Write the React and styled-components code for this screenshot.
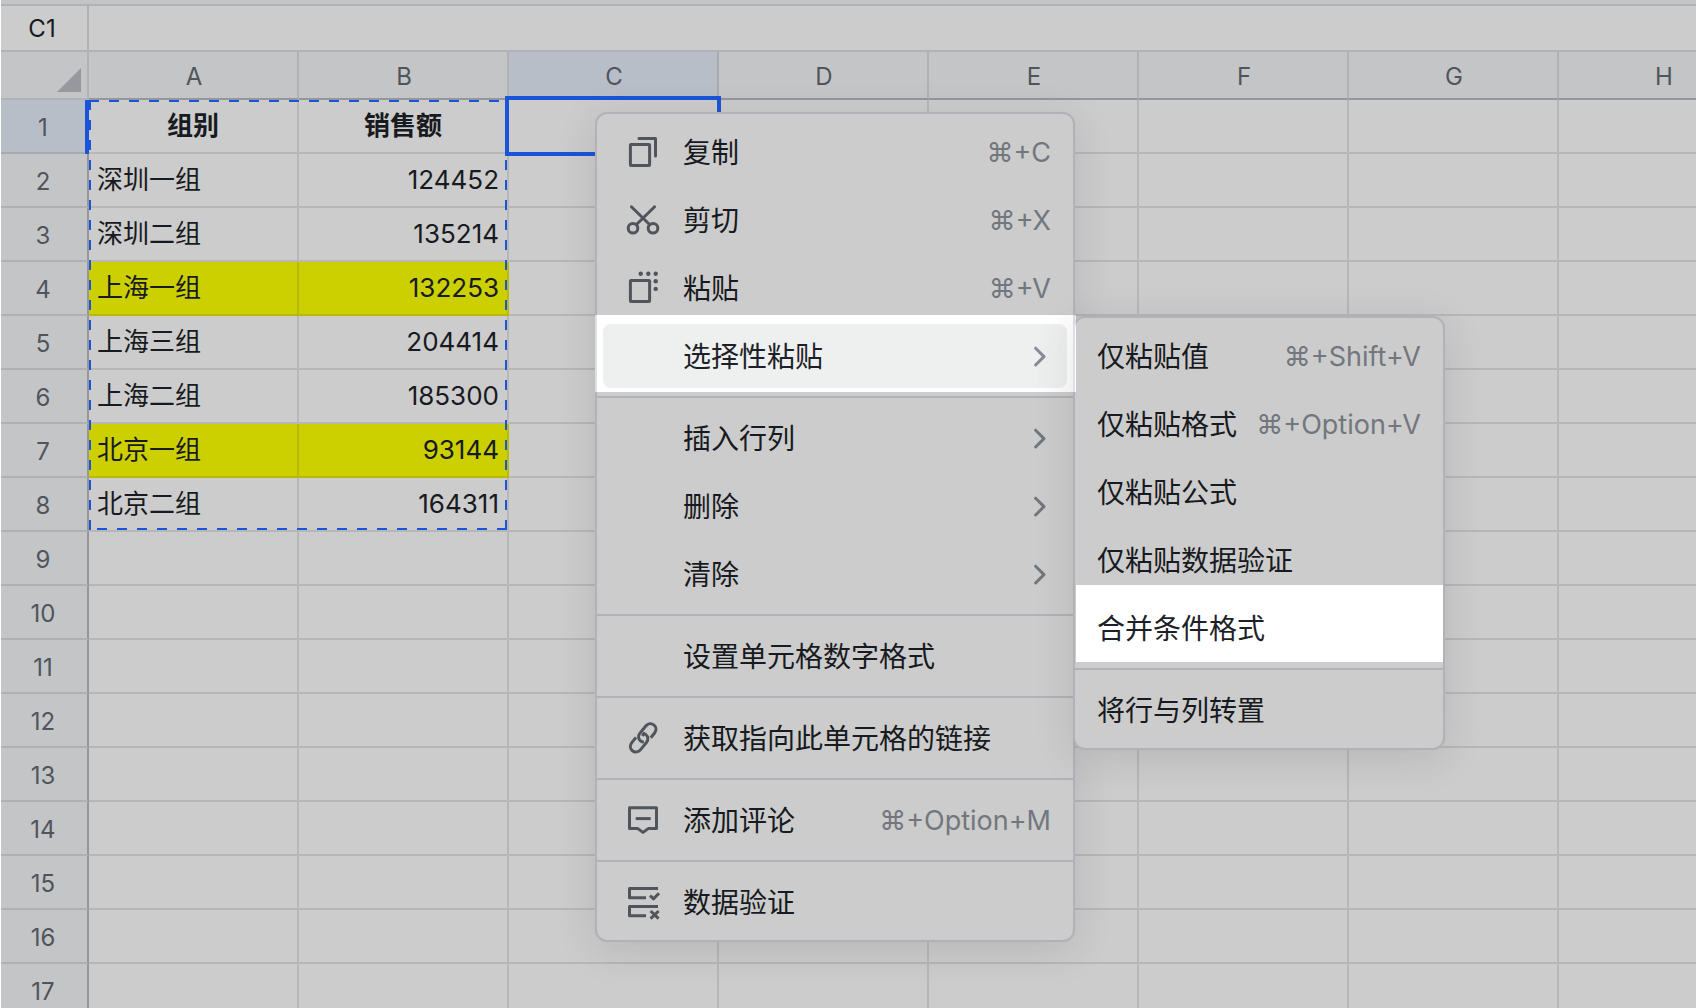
import { useState } from "react";
import styled, { createGlobalStyle, css } from "styled-components";

const HEAD_WIDTH = 88;
const HEAD_HEIGHT = 48;
const COL_WIDTH = 210;
const ROW_HEIGHT = 54;

const colors = {
  sheet: "#cccccc",
  header: "#c4c5c7",
  headerActive: "#b8bec8",
  line: "rgba(31, 35, 41, 0.12)",
  strongLine: "#949699",
  border: "#b1b2b5",
  text: "#171a20",
  icon: "#50555c",
  muted: "#72777e",
  blue: "#1a54d8",
  yellow: "#cccf00",
};

const GlobalStyle = createGlobalStyle`
  * {
    box-sizing: border-box;
  }

  body {
    margin: 0;
    background: ${colors.sheet};
    color: ${colors.text};
    font-family: Inter, "Noto Sans CJK SC", sans-serif;
  }

  button, input {
    font: inherit;
    color: inherit;
  }
`;

const Page = styled.main`
  position: relative;
  height: 100vh;
  overflow: hidden;
  border-left: 1px solid #fff;
`;

const ToolbarEdge = styled.div`
  height: 6px;
  background: ${colors.header};
  border-bottom: 2px solid ${colors.border};
`;

const FormulaBar = styled.div`
  display: flex;
  height: 46px;
  border-bottom: 2px solid ${colors.border};
`;

const NameBox = styled.input`
  width: ${HEAD_WIDTH}px;
  padding: 0 4px 0 0;
  border: 0;
  border-right: 2px solid ${colors.border};
  background: transparent;
  font-size: 24px;
  text-align: center;
`;

const FormulaInput = styled.input`
  flex: 1;
  min-width: 0;
  padding: 0 12px;
  border: 0;
  background: transparent;
  font-size: 24px;
`;

const Sheet = styled.div`
  position: relative;
`;

const Grid = styled.table`
  width: ${HEAD_WIDTH + COL_WIDTH * 8}px;
  table-layout: fixed;
  border-collapse: separate;
  border-spacing: 0;

  th, td {
    position: relative;
    overflow: visible;
    white-space: nowrap;
  }
`;

const Corner = styled.td`
  width: ${HEAD_WIDTH}px;
  height: ${HEAD_HEIGHT}px;
  padding: 0 6px 6px 0;
  background: ${colors.header};
  border-right: 2px solid ${colors.border};
  border-bottom: 2px solid ${colors.border};
  vertical-align: bottom;

  svg {
    display: block;
    margin-left: auto;
  }
`;

const ColHead = styled.th`
  width: ${COL_WIDTH}px;
  height: ${HEAD_HEIGHT}px;
  padding: 2px 0 0 2px;
  background: ${(p) => (p.$active ? colors.headerActive : colors.header)};
  border-right: 2px solid ${colors.line};
  border-bottom: 2px solid ${colors.strongLine};
  color: ${colors.icon};
  font-size: 24px;
  font-weight: 400;
`;

const RowHead = styled.th`
  height: ${ROW_HEIGHT}px;
  padding: 2px 2px 0 0;
  background: ${(p) => (p.$active ? colors.headerActive : colors.header)};
  border-right: 2px solid ${colors.strongLine};
  border-bottom: 2px solid ${colors.line};
  color: ${colors.icon};
  font-size: 24px;
  font-weight: 400;

  ${(p) => p.$active && css`
    &::after {
      content: "";
      position: absolute;
      top: 0;
      right: -2px;
      bottom: -2px;
      width: 4px;
      background: ${colors.blue};
    }
  `}
`;

const Cell = styled.td`
  height: ${ROW_HEIGHT}px;
  padding: 0 8px;
  background: ${(p) => (p.$marked ? colors.yellow : colors.sheet)};
  border-right: 2px solid ${colors.line};
  border-bottom: 2px solid ${colors.line};
  font-size: 26px;
  line-height: 36px;
  font-weight: ${(p) => (p.$bold ? 700 : 400)};
  text-align: ${(p) => p.$align || "left"};

  ${(p) => p.$selected && css`
    &::after {
      content: "";
      position: absolute;
      z-index: 2;
      inset: -4px;
      border: 4px solid ${colors.blue};
    }
  `}
`;

const dash = (dir) =>
  `repeating-linear-gradient(${dir}, ${colors.blue} 0 10px, transparent 10px 20px)`;

// marching ants around the copied range
const CopiedRange = styled.div`
  position: absolute;
  z-index: 1;
  top: ${HEAD_HEIGHT}px;
  left: ${HEAD_WIDTH}px;
  width: ${(p) => p.$cols * COL_WIDTH - 2}px;
  height: ${(p) => p.$rows * ROW_HEIGHT - 2}px;
  pointer-events: none;
  background:
    ${dash("to right")} top / 100% 2px no-repeat,
    ${dash("to left")} bottom / 100% 2px no-repeat,
    ${dash("to bottom")} left / 2px 100% no-repeat,
    ${dash("to bottom")} right / 2px 100% no-repeat;
`;

const MenuList = styled.ul`
  position: absolute;
  z-index: 3;
  margin: 0;
  padding: 4px 0;
  list-style: none;
  background: ${colors.sheet};
  border: 2px solid ${colors.border};
  border-radius: 12px;
  box-shadow: 0 8px 40px rgba(31, 35, 41, 0.12);
`;

const ContextMenu = styled(MenuList)`
  top: 112px;
  left: 594px;
  width: 480px;
`;

const SubMenu = styled(MenuList)`
  top: -6px;
  left: 100%;
  width: 372px;
`;

const Entry = styled.li`
  position: relative;
`;

const Item = styled.button`
  position: relative;
  display: flex;
  align-items: center;
  gap: ${(p) => (p.$compact ? 16 : 24)}px;
  width: 100%;
  height: 68px;
  padding: 0 22px 0 ${(p) => (p.$compact ? 22 : 30)}px;
  border: 0;
  background: transparent;
  font-size: 28px;
  line-height: 40px;
  text-align: left;
  white-space: nowrap;

  ${(p) => p.$open && css`
    &::before {
      content: "";
      position: absolute;
      inset: 2px 6px;
      border-radius: 8px;
      background: rgba(31, 35, 41, 0.08);
    }
  `}
`;

const IconSlot = styled.span`
  flex: none;
  width: 32px;
  height: 32px;
  color: ${colors.icon};

  svg {
    display: block;
    overflow: visible;
  }
`;

const Label = styled.span`
  flex: 1;
  padding-top: 2px;
`;

const Shortcut = styled.kbd`
  padding-top: 2px;
  color: ${colors.muted};
  font-family: inherit;
  font-size: 27px;
`;

const Separator = styled.li`
  height: 2px;
  margin: 6px 0;
  background: ${colors.border};
`;

// lifts the 20% dimming from the area it covers
const Spotlight = styled.span`
  position: absolute;
  z-index: 4;
  top: ${(p) => p.$top}px;
  right: ${(p) => p.$right}px;
  left: ${(p) => p.$left}px;
  height: 77px;
  pointer-events: none;
  backdrop-filter: brightness(1.25);
`;

const Icon = ({ children }) => (
  <svg width="32" height="32" viewBox="0 0 32 32" fill="none" stroke="currentColor" strokeWidth="3" strokeLinejoin="round" aria-hidden="true">
    {children}
  </svg>
);

const icons = {
  copy: (
    <Icon>
      <rect x="3.4" y="8.4" width="19.2" height="21.2" rx="0.6" />
      <path d="M12 2.4H28.5V20" strokeLinecap="round" />
    </Icon>
  ),
  cut: (
    <Icon>
      <circle cx="6" cy="24.3" r="4.8" />
      <circle cx="26" cy="24.3" r="4.8" />
      <path d="M4.4 2.8 22.8 20.8M27.6 2.8 9.2 20.8" strokeLinecap="round" />
    </Icon>
  ),
  paste: (
    <Icon>
      <rect x="3.4" y="8.4" width="19.2" height="21.2" rx="0.6" />
      <g fill="currentColor" stroke="none">
        <circle cx="13.7" cy="1.7" r="2.2" />
        <circle cx="21.3" cy="1.7" r="2.2" />
        <circle cx="28.7" cy="1.7" r="2.2" />
        <circle cx="28.7" cy="9.3" r="2.2" />
        <circle cx="28.7" cy="16.9" r="2.2" />
      </g>
    </Icon>
  ),
  link: (
    <Icon>
      <path d="M23.8 15.8 27.6 11C29.8 8.200 29.200 4.800 26.800 2.900 24.400 1 21 1.400 18.800 4L12.800 11.400C10.800 14 11.200 17.200 13.600 19 14.600 19.700 15.600 20 16.800 20" />
      <path d="M9 15.400 4.800 20.600C2.600 23.400 3 26.800 5.400 28.700 7.800 30.600 11.400 30.200 13.600 27.600L19.600 20.200C21.600 17.600 21.200 14.400 18.800 12.600L17 11.400 15.400 14" />
    </Icon>
  ),
  comment: (
    <Icon>
      <path d="M2.5 3.8H29.5V24.6H21.2L16 28.4 10.8 24.6H2.5Z" />
      <path d="M8.7 14.6H23.7" />
    </Icon>
  ),
  validation: (
    <Icon>
      <path d="M31 2.4H2.5V11.7H19M31 20.4H2.5V29.7H19" />
      <path d="M23 9.6 26.6 12.8 32 7.2" />
      <path d="M23.6 25 31.6 32.6M31.6 25 23.6 32.6" />
    </Icon>
  ),
};

const Chevron = () => (
  <svg width="24" height="24" viewBox="0 0 24 24" fill="none" stroke={colors.muted} strokeWidth="3" strokeLinecap="round" strokeLinejoin="round" aria-hidden="true">
    <path d="M8.600 4.200 17 12.600 8.600 21" />
  </svg>
);

const columns = ["A", "B", "C", "D", "E", "F", "G", "H"];

const records = [
  ["组别", "销售额"],
  ["深圳一组", 124452],
  ["深圳二组", 135214],
  ["上海一组", 132253],
  ["上海三组", 204414],
  ["上海二组", 185300],
  ["北京一组", 93144],
  ["北京二组", 164311],
];

const markedRows = [4, 7];

const menu = [
  { label: "复制", icon: "copy", keys: "⌘+C" },
  { label: "剪切", icon: "cut", keys: "⌘+X" },
  { label: "粘贴", icon: "paste", keys: "⌘+V" },
  {
    label: "选择性粘贴",
    children: [
      { label: "仅粘贴值", keys: "⌘+Shift+V" },
      { label: "仅粘贴格式", keys: "⌘+Option+V" },
      { label: "仅粘贴公式" },
      { label: "仅粘贴数据验证" },
      { label: "合并条件格式", spotlight: true },
      null,
      { label: "将行与列转置" },
    ],
  },
  null,
  { label: "插入行列", more: true },
  { label: "删除", more: true },
  { label: "清除", more: true },
  null,
  { label: "设置单元格数字格式" },
  null,
  { label: "获取指向此单元格的链接", icon: "link" },
  null,
  { label: "添加评论", icon: "comment", keys: "⌘+Option+M" },
  null,
  { label: "数据验证", icon: "validation" },
];

function SheetRow({ number }) {
  const values = records[number - 1] || [];
  const isTitle = number === 1;

  return (
    <tr>
      <RowHead scope="row" $active={isTitle}>{number}</RowHead>
      {columns.map((col, i) => (
        <Cell
          key={col}
          $bold={isTitle}
          $align={isTitle ? "center" : i === 1 ? "right" : "left"}
          $marked={i < 2 && markedRows.includes(number)}
          $selected={isTitle && col === "C"}
        >
          {values[i]}
        </Cell>
      ))}
    </tr>
  );
}

function SubEntries({ items }) {
  return (
    <SubMenu>
      {items.map((item, i) =>
        item ? (
          <Entry key={item.label}>
            <Item type="button" $compact>
              <Label>{item.label}</Label>
              {item.keys && <Shortcut>{item.keys}</Shortcut>}
            </Item>
            {item.spotlight && <Spotlight $top={-9} $left={1} $right={0} />}
          </Entry>
        ) : (
          <Separator key={i} role="separator" />
        )
      )}
    </SubMenu>
  );
}

function App() {
  const [cellName, setCellName] = useState("C1");
  const [formula, setFormula] = useState("");

  return (
    <>
      <GlobalStyle />
      <Page>
        <ToolbarEdge />
        <FormulaBar>
          <NameBox aria-label="单元格" value={cellName} onChange={(e) => setCellName(e.target.value)} />
          <FormulaInput aria-label="公式" value={formula} onChange={(e) => setFormula(e.target.value)} />
        </FormulaBar>

        <Sheet>
          <Grid>
            <thead>
              <tr>
                <Corner>
                  <svg width="24" height="24" viewBox="0 0 24 24" aria-hidden="true">
                    <path d="M24 0V24H0Z" fill="#96989e" />
                  </svg>
                </Corner>
                {columns.map((col) => (
                  <ColHead key={col} scope="col" $active={col === "C"}>{col}</ColHead>
                ))}
              </tr>
            </thead>
            <tbody>
              {Array.from({ length: 17 }, (_, i) => (
                <SheetRow key={i} number={i + 1} />
              ))}
            </tbody>
          </Grid>
          <CopiedRange $cols={2} $rows={8} />
        </Sheet>

        <ContextMenu>
          {menu.map((item, i) =>
            item ? (
              <Entry key={item.label}>
                <Item type="button" $open={!!item.children}>
                  <IconSlot>{icons[item.icon]}</IconSlot>
                  <Label>{item.label}</Label>
                  {item.keys && <Shortcut>{item.keys}</Shortcut>}
                  {(item.more || item.children) && <Chevron />}
                </Item>
                {item.children && (
                  <>
                    <SubEntries items={item.children} />
                    <Spotlight $top={-7} $left={-2} $right={-3} />
                  </>
                )}
              </Entry>
            ) : (
              <Separator key={i} role="separator" />
            )
          )}
        </ContextMenu>
      </Page>
    </>
  );
}

export default App;
